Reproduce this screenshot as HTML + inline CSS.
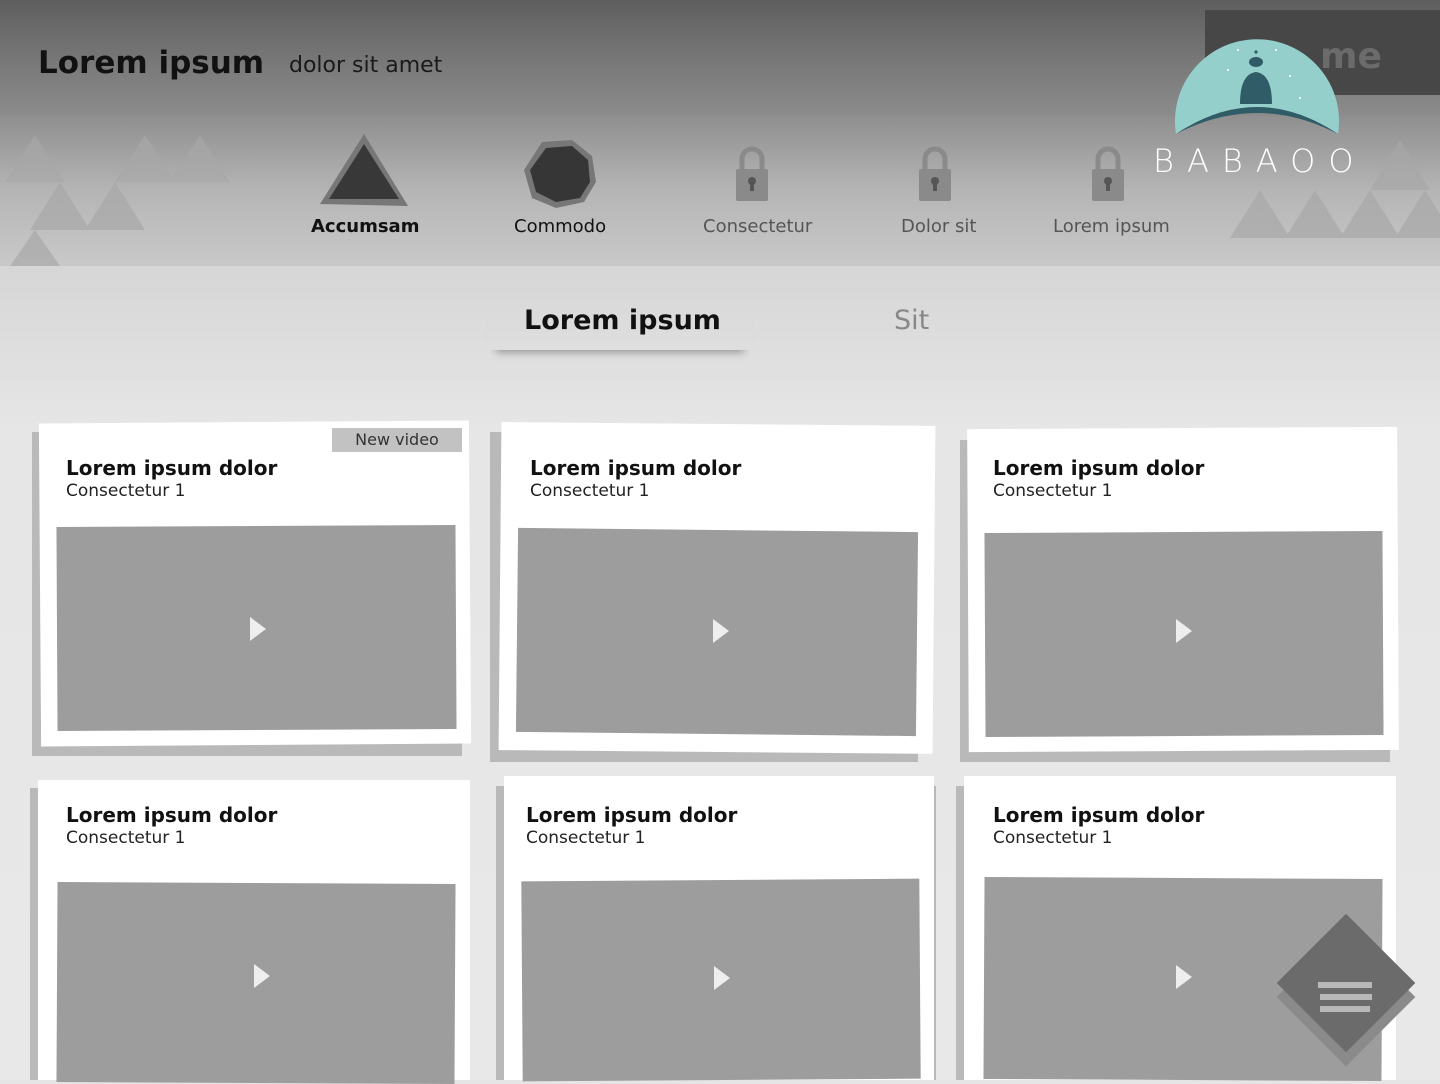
<!DOCTYPE html>
<html><head><meta charset="utf-8"><style>
*{margin:0;padding:0;box-sizing:border-box}
body{width:1440px;height:1080px;overflow:hidden;background:#e5e5e5;font-family:"DejaVu Sans","Liberation Sans",sans-serif;position:relative}
.top{position:absolute;left:0;top:0;width:1440px;height:120px;background:linear-gradient(#5e5e5e,#7c7c7c 60%,#8d8d8d)}
.nav{position:absolute;left:0;top:116px;width:1440px;height:150px;background:linear-gradient(#8f8f8f,#b5b5b5 50%,#c9c9c9)}
.below{position:absolute;left:0;top:266px;width:1440px;height:814px;background:linear-gradient(#d6d6d6,#e6e6e6 20%,#e8e8e8)}
.abs{position:absolute}
.card{position:absolute;background:#fff}
.shadow{position:absolute;background:#b9b9b9}
.vid{position:absolute;background:#9d9d9d}
.t{position:absolute;font-weight:bold;font-size:20px;color:#111}
.s{position:absolute;font-size:17px;color:#222}
.play{position:absolute;width:0;height:0;border-left:16px solid #eee;border-top:12px solid transparent;border-bottom:12px solid transparent}
.lbl{position:absolute;font-size:18px;color:#555;top:216px}
</style></head><body>
<div class="top"></div>
<div class="nav"></div>
<div class="below"></div>
<div class="abs" style="left:1205px;top:10px;width:235px;height:85px;background:#474747"></div>
<div class="abs" style="left:1320px;top:36px;font-size:36px;font-weight:bold;color:#6b6b6b">me</div>
<svg class="abs" style="left:0;top:120px" width="240" height="146"><g fill="#a8a8a8" opacity=".7"><polygon points="35,15 5,62 65,62"/><polygon points="145,15 115,62 175,62"/><polygon points="200,15 170,62 230,62"/><polygon points="60,62 30,110 90,110"/><polygon points="115,62 85,110 145,110"/><polygon points="35,110 10,146 60,146"/></g></svg>
<svg class="abs" style="left:1220px;top:120px" width="220" height="146"><g fill="#a8a8a8" opacity=".7"><polygon points="180,20 150,70 210,70"/><polygon points="40,70 10,118 70,118"/><polygon points="95,70 65,118 125,118"/><polygon points="150,70 120,118 180,118"/><polygon points="205,70 175,118 235,118"/></g></svg>
<div class="abs" style="left:38px;top:45px;font-size:31px;font-weight:bold;color:#111">Lorem ipsum</div>
<div class="abs" style="left:289px;top:53px;font-size:22px;color:#1a1a1a">dolor sit amet</div>
<svg class="abs" style="left:318px;top:132px" width="92" height="78"><polygon points="46,2 2,72 90,74" fill="#777"/><polygon points="46,12 11,67 81,67" fill="#383838"/></svg>
<svg class="abs" style="left:522px;top:138px" width="76" height="72"><polygon points="20,4 50,2 70,18 74,44 62,64 34,70 10,60 2,32" fill="#777"/><polygon points="24,10 50,8 66,22 68,44 58,60 34,64 14,54 8,32" fill="#363636"/></svg>
<svg class="abs" style="left:734px;top:145px" width="36" height="58"><path d="M8,24 V14 a10,10 0 0 1 20,0 V24" fill="none" stroke="#8a8a8a" stroke-width="5"/><rect x="2" y="24" width="32" height="32" rx="2" fill="#8a8a8a"/><path d="M16,38 h4 v8 h-4z" fill="#555"/><circle cx="18" cy="36" r="4" fill="#555"/></svg>
<svg class="abs" style="left:917px;top:145px" width="36" height="58"><path d="M8,24 V14 a10,10 0 0 1 20,0 V24" fill="none" stroke="#8a8a8a" stroke-width="5"/><rect x="2" y="24" width="32" height="32" rx="2" fill="#8a8a8a"/><path d="M16,38 h4 v8 h-4z" fill="#555"/><circle cx="18" cy="36" r="4" fill="#555"/></svg>
<svg class="abs" style="left:1090px;top:145px" width="36" height="58"><path d="M8,24 V14 a10,10 0 0 1 20,0 V24" fill="none" stroke="#8a8a8a" stroke-width="5"/><rect x="2" y="24" width="32" height="32" rx="2" fill="#8a8a8a"/><path d="M16,38 h4 v8 h-4z" fill="#555"/><circle cx="18" cy="36" r="4" fill="#555"/></svg>
<div class="lbl" style="left:311px;font-weight:bold;color:#111">Accumsam</div>
<div class="lbl" style="left:514px;color:#111">Commodo</div>
<div class="lbl" style="left:703px">Consectetur</div>
<div class="lbl" style="left:901px">Dolor sit</div>
<div class="lbl" style="left:1053px">Lorem ipsum</div>
<svg class="abs" style="left:1170px;top:30px" width="172" height="106"><path d="M6,104 A82,82 0 1 1 168,104 Q87,50 6,104Z" fill="#95cfcc"/><path d="M6,104 Q87,50 168,104 Q87,62 6,104Z" fill="#2f5c66"/><path d="M70,74 Q70,44 86,42 Q102,44 102,74Z" fill="#2f5c66"/><ellipse cx="86" cy="32" rx="7" ry="5" fill="#2f5c66"/><circle cx="86" cy="22" r="1.6" fill="#2f5c66"/><g fill="#fff"><circle cx="68" cy="20" r="1"/><circle cx="106" cy="20" r="1"/><circle cx="58" cy="40" r="1"/><circle cx="120" cy="46" r="1"/><circle cx="130" cy="68" r="1"/></g></svg>
<div class="abs" style="left:1153px;top:142px;font-size:32px;color:#fff;letter-spacing:13px;font-weight:300">BABAOO</div>
<div class="abs" style="left:488px;top:292px;width:264px;height:58px;box-shadow:0 10px 8px -8px rgba(0,0,0,.35)"></div>
<div class="abs" style="left:524px;top:305px;font-size:27px;font-weight:bold;color:#111">Lorem ipsum</div>
<div class="abs" style="left:894px;top:305px;font-size:27px;color:#888">Sit</div>
<!-- row 1 -->
<div class="shadow" style="left:32px;top:432px;width:430px;height:324px"></div>
<div class="card" style="left:40px;top:422px;width:430px;height:323px;transform:rotate(-.4deg)"></div>
<div class="abs" style="left:332px;top:428px;width:130px;height:24px;background:#c2c2c2;font-size:16px;color:#333;text-align:center;line-height:24px">New video</div>
<div class="vid" style="left:57px;top:526px;width:399px;height:204px;transform:rotate(-.3deg)"></div>
<div class="shadow" style="left:490px;top:432px;width:428px;height:330px"></div>
<div class="card" style="left:500px;top:424px;width:434px;height:328px;transform:rotate(.5deg)"></div>
<div class="vid" style="left:517px;top:530px;width:400px;height:204px;transform:rotate(.6deg)"></div>
<div class="shadow" style="left:960px;top:440px;width:430px;height:322px"></div>
<div class="card" style="left:968px;top:428px;width:430px;height:323px;transform:rotate(-.3deg)"></div>
<div class="vid" style="left:985px;top:532px;width:398px;height:204px;transform:rotate(-.3deg)"></div>
<!-- row 2 -->
<div class="shadow" style="left:30px;top:788px;width:440px;height:292px"></div>
<div class="card" style="left:38px;top:780px;width:432px;height:300px"></div>
<div class="vid" style="left:57px;top:883px;width:398px;height:200px;transform:rotate(.3deg)"></div>
<div class="shadow" style="left:496px;top:786px;width:440px;height:294px"></div>
<div class="card" style="left:504px;top:776px;width:430px;height:304px"></div>
<div class="vid" style="left:522px;top:880px;width:398px;height:200px;transform:rotate(-.4deg)"></div>
<div class="shadow" style="left:956px;top:786px;width:438px;height:294px"></div>
<div class="card" style="left:964px;top:776px;width:432px;height:304px"></div>
<div class="vid" style="left:984px;top:878px;width:398px;height:202px;transform:rotate(.3deg)"></div>
<div class="t" style="left:66px;top:456px">Lorem ipsum dolor</div><div class="s" style="left:66px;top:481px">Consectetur 1</div>
<div class="t" style="left:530px;top:456px">Lorem ipsum dolor</div><div class="s" style="left:530px;top:481px">Consectetur 1</div>
<div class="t" style="left:993px;top:456px">Lorem ipsum dolor</div><div class="s" style="left:993px;top:481px">Consectetur 1</div>
<div class="t" style="left:66px;top:803px">Lorem ipsum dolor</div><div class="s" style="left:66px;top:828px">Consectetur 1</div>
<div class="t" style="left:526px;top:803px">Lorem ipsum dolor</div><div class="s" style="left:526px;top:828px">Consectetur 1</div>
<div class="t" style="left:993px;top:803px">Lorem ipsum dolor</div><div class="s" style="left:993px;top:828px">Consectetur 1</div>
<div class="play" style="left:250px;top:617px"></div>
<div class="play" style="left:713px;top:619px"></div>
<div class="play" style="left:1176px;top:619px"></div>
<div class="play" style="left:254px;top:964px"></div>
<div class="play" style="left:714px;top:966px"></div>
<div class="play" style="left:1176px;top:965px"></div>
<div class="abs" style="left:1297px;top:948px;width:98px;height:98px;background:#8a8a8a;transform:rotate(45deg)"></div>
<div class="abs" style="left:1297px;top:934px;width:98px;height:98px;background:#6b6b6b;transform:rotate(45deg)"></div>
<div class="abs" style="left:1318px;top:982px;width:54px;height:6px;background:#b8b8b8"></div>
<div class="abs" style="left:1320px;top:994px;width:52px;height:6px;background:#b8b8b8"></div>
<div class="abs" style="left:1320px;top:1006px;width:50px;height:6px;background:#b8b8b8"></div>
</body></html>
